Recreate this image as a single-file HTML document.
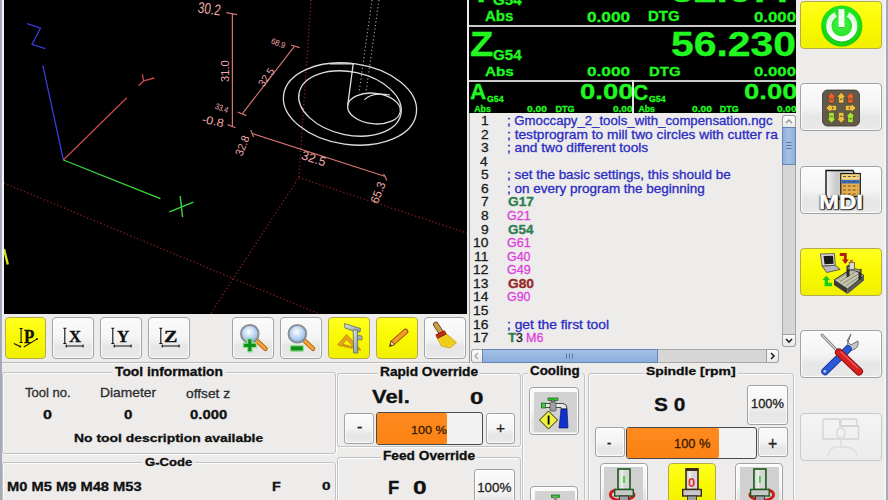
<!DOCTYPE html>
<html><head><meta charset="utf-8"><style>
*{box-sizing:border-box;margin:0;padding:0}
html,body{width:888px;height:500px;overflow:hidden}
body{position:relative;background:#edeceb;font-family:"Liberation Sans",sans-serif;color:#000}
.a{position:absolute}
.t{position:absolute;white-space:pre;line-height:1;-webkit-text-stroke-width:0.3px}
.btn{position:absolute;border:1px solid #a2a2a2;border-radius:4px;background:linear-gradient(#fbfbfb 0%,#f4f4f4 50%,#e6e6e6 72%,#e9e9e9 100%);box-shadow:inset 0 0 0 1px rgba(255,255,255,.8)}
.ybtn{position:absolute;border:1px solid #b4ab50;border-radius:4px;background:linear-gradient(#ffff20 0%,#f9f900 50%,#f0f000 100%)}
.dis{position:absolute;border:1px solid #cacaca;border-radius:4px;background:linear-gradient(#f4f4f4,#ececec)}
.frm{position:absolute;border:1px solid #c2c2c2;border-radius:3px;box-shadow:inset 1px 1px 0 #fbfbfb,1px 1px 0 #fbfbfb}
.tb{position:absolute;background:#edeceb}
svg{position:absolute;overflow:visible}
</style></head><body>
<div class="a" style="left:0;top:0;width:2px;height:500px;background:#a4aab8"></div>
<div class="a" style="left:2px;top:0;width:2px;height:315px;background:#f3f5f8"></div>
<div class="a" style="left:4px;top:0;width:463px;height:314px;background:#000;overflow:hidden"><svg width="463" height="314" viewBox="4 0 463 314" style="left:0;top:0"><path d="M4,183 L233.2,278.5 L322,315" fill="none" stroke="#902020" stroke-width="1.3" stroke-dasharray="1.2 2.4" opacity="1"/><path d="M311,0 L298.8,177.6 L233.2,278.5 L210,315" fill="none" stroke="#902020" stroke-width="1.3" stroke-dasharray="1.2 2.4" opacity="1"/><path d="M298.8,177.6 L467,233" fill="none" stroke="#902020" stroke-width="1.3" stroke-dasharray="1.2 2.4" opacity="1"/><path d="M63.4,160 L42.8,65.4" fill="none" stroke="#3a3ad8" stroke-width="1.3" opacity="1"/><path d="M27.2,23.6 L40.4,28.2 L32,44.4 L45.2,48.6" fill="none" stroke="#3a3ad8" stroke-width="1.3" opacity="1"/><path d="M63.4,160 L126.8,97.8" fill="none" stroke="#c84848" stroke-width="1.3" opacity="1"/><path d="M142.4,74.2 L143.6,81 L154.4,78" fill="none" stroke="#c84848" stroke-width="1.3" opacity="1"/><path d="M143.6,81 L138.6,85.8" fill="none" stroke="#c84848" stroke-width="1.3" opacity="1"/><path d="M63.4,160 L160.4,198.6" fill="none" stroke="#3cd83c" stroke-width="1.3" opacity="1"/><path d="M180.2,196.2 L182.6,217.2" fill="none" stroke="#3cd83c" stroke-width="1.4" opacity="1"/><path d="M169.4,211.8 L193.4,202.2" fill="none" stroke="#3cd83c" stroke-width="1.4" opacity="1"/><path d="M4,249 L7.8,264.5" fill="none" stroke="#d8e020" stroke-width="2.4" opacity="1"/><path d="M232.4,14 L232.4,126.2" fill="none" stroke="#d47474" stroke-width="1.2" opacity="1"/><path d="M226.4,12.6 L237,14.7" fill="none" stroke="#d47474" stroke-width="1.2" opacity="1"/><path d="M227.6,124.6 L235.6,127.8" fill="none" stroke="#d47474" stroke-width="1.2" opacity="1"/><path d="M242.4,113.6 L294.4,46.4" fill="none" stroke="#d47474" stroke-width="1.2" opacity="1"/><path d="M237.6,112 L246.4,115.6" fill="none" stroke="#d47474" stroke-width="1.2" opacity="1"/><path d="M291,45 L299.6,47.6" fill="none" stroke="#d47474" stroke-width="1.2" opacity="1"/><path d="M252.3,133.5 L384.7,176.3" fill="none" stroke="#d47474" stroke-width="1.2" opacity="1"/><path d="M250.7,130 L253.6,136.9" fill="none" stroke="#d47474" stroke-width="1.2" opacity="1"/><path d="M383.6,174 L387,180.4" fill="none" stroke="#d47474" stroke-width="1.2" opacity="1"/><ellipse cx="350" cy="104" rx="67" ry="40.5" transform="rotate(8 350 104)" fill="none" stroke="#dcdcdc" stroke-width="1.3"/><ellipse cx="350" cy="103.5" rx="52" ry="31.5" transform="rotate(12 350 103.5)" fill="none" stroke="#dcdcdc" stroke-width="1.3"/><ellipse cx="374" cy="108.5" rx="26.5" ry="15.3" transform="rotate(6 374 108.5)" fill="none" stroke="#dcdcdc" stroke-width="1.3"/><path d="M330,63.8 L353.2,63.8 L347.6,106.2" fill="none" stroke="#dcdcdc" stroke-width="1.3" opacity="1"/><path d="M364.4,99.8 Q372,92 390,95" fill="none" stroke="#dcdcdc" stroke-width="1.1"/><path d="M379,0 L366,92" fill="none" stroke="#90b0b0" stroke-width="1.1" stroke-dasharray="1.2 2.4" opacity="1"/><path d="M372,0 L359,93" fill="none" stroke="#90b0b0" stroke-width="1.1" stroke-dasharray="1.2 2.4" opacity="1"/></svg>
<div class="a" style="left:205.2px;top:8px;width:0;height:0;transform:rotate(8deg)"><div class="a" style="left:-11.0px;top:-5.5px"><span class="t" style="left:-0.47px;top:-1.82px;font-size:15.49px;font-weight:normal;color:#f0aaaa;font-family:'Liberation Sans';transform:scaleX(0.7634);transform-origin:0 0;-webkit-text-stroke-width:0">30.2</span></div></div>
<div class="a" style="left:221.2px;top:70.6px;width:0;height:0;transform:rotate(-90deg)"><div class="a" style="left:-10.5px;top:-3.75px"><span class="t" style="left:-0.45px;top:-1.08px;font-size:10.56px;font-weight:normal;color:#f0aaaa;font-family:'Liberation Sans';transform:scaleX(1.0631);transform-origin:0 0;-webkit-text-stroke-width:0">31.0</span></div></div>
<div class="a" style="left:218px;top:107.8px;width:0;height:0;transform:rotate(20deg)"><div class="a" style="left:-6.5px;top:-3.0px"><span class="t" style="left:-0.28px;top:-0.77px;font-size:8.45px;font-weight:normal;color:#f0aaaa;font-family:'Liberation Sans';transform:scaleX(0.8183);transform-origin:0 0;-webkit-text-stroke-width:0">33.4</span></div></div>
<div class="a" style="left:209.2px;top:121.4px;width:0;height:0;transform:rotate(12deg)"><div class="a" style="left:-10.5px;top:-4.0px"><span class="t" style="left:-0.51px;top:-1.19px;font-size:11.27px;font-weight:normal;color:#f0aaaa;font-family:'Liberation Sans';transform:scaleX(1.1364);transform-origin:0 0;-webkit-text-stroke-width:0">-0.8</span></div></div>
<div class="a" style="left:274px;top:42.5px;width:0;height:0;transform:rotate(22deg)"><div class="a" style="left:-7.0px;top:-3.0px"><span class="t" style="left:-0.38px;top:-0.77px;font-size:8.45px;font-weight:normal;color:#f0aaaa;font-family:'Liberation Sans';transform:scaleX(0.8955);transform-origin:0 0;-webkit-text-stroke-width:0">68.9</span></div></div>
<div class="a" style="left:262px;top:77px;width:0;height:0;transform:rotate(-55deg)"><div class="a" style="left:-9.5px;top:-3.75px"><span class="t" style="left:-0.41px;top:-1.08px;font-size:10.56px;font-weight:normal;color:#f0aaaa;font-family:'Liberation Sans';transform:scaleX(0.9670);transform-origin:0 0;-webkit-text-stroke-width:0">32.5</span></div></div>
<div class="a" style="left:237.7px;top:145.9px;width:0;height:0;transform:rotate(-68deg)"><div class="a" style="left:-10.0px;top:-4.0px"><span class="t" style="left:-0.43px;top:-1.19px;font-size:11.27px;font-weight:normal;color:#f0aaaa;font-family:'Liberation Sans';transform:scaleX(0.9543);transform-origin:0 0;-webkit-text-stroke-width:0">32.8</span></div></div>
<div class="a" style="left:310px;top:159.2px;width:0;height:0;transform:rotate(18deg)"><div class="a" style="left:-12.0px;top:-4.5px"><span class="t" style="left:-0.52px;top:-1.40px;font-size:12.68px;font-weight:normal;color:#f0aaaa;font-family:'Liberation Sans';transform:scaleX(1.0179);transform-origin:0 0;-webkit-text-stroke-width:0">32.5</span></div></div>
<div class="a" style="left:375px;top:193.2px;width:0;height:0;transform:rotate(-68deg)"><div class="a" style="left:-10.5px;top:-4.25px"><span class="t" style="left:-0.57px;top:-1.30px;font-size:11.97px;font-weight:normal;color:#f0aaaa;font-family:'Liberation Sans';transform:scaleX(0.9482);transform-origin:0 0;-webkit-text-stroke-width:0">65.3</span></div></div>
</div>
<div class="a" style="left:467px;top:0;width:2px;height:314px;background:#ececec"></div>
<div class="a" style="left:469px;top:0;width:327px;height:113px;background:#000;overflow:hidden">
<span class="t" style="left:1.13px;top:-27.47px;font-size:34.78px;font-weight:bold;color:#20f820;font-family:'Liberation Sans';transform:scaleX(0.9583);transform-origin:0 0;">Y</span>
<span class="t" style="left:23.99px;top:-6.55px;font-size:14.37px;font-weight:bold;color:#20f820;font-family:'Liberation Sans';transform:scaleX(1.0535);transform-origin:0 0;">G54</span>
<span class="t" style="left:201.57px;top:-26.63px;font-size:34.23px;font-weight:bold;color:#20f820;font-family:'Liberation Sans';transform:scaleX(1.1981);transform-origin:0 0;">52.677</span>
<span class="t" style="left:16.15px;top:10.45px;font-size:13.78px;font-weight:bold;color:#20f820;font-family:'Liberation Sans';transform:scaleX(1.0922);transform-origin:0 0;">Abs</span>
<span class="t" style="left:117.91px;top:10.17px;font-size:14.23px;font-weight:bold;color:#20f820;font-family:'Liberation Sans';transform:scaleX(1.2113);transform-origin:0 0;">0.000</span>
<span class="t" style="left:179.45px;top:10.41px;font-size:13.94px;font-weight:bold;color:#20f820;font-family:'Liberation Sans';transform:scaleX(1.0758);transform-origin:0 0;">DTG</span>
<span class="t" style="left:284.83px;top:10.17px;font-size:14.23px;font-weight:bold;color:#20f820;font-family:'Liberation Sans';transform:scaleX(1.1823);transform-origin:0 0;">0.000</span>
<span class="t" style="left:0.65px;top:27.18px;font-size:34.49px;font-weight:bold;color:#20f820;font-family:'Liberation Sans';transform:scaleX(1.1070);transform-origin:0 0;">Z</span>
<span class="t" style="left:24.19px;top:47.95px;font-size:14.37px;font-weight:bold;color:#20f820;font-family:'Liberation Sans';transform:scaleX(1.0535);transform-origin:0 0;">G54</span>
<span class="t" style="left:201.57px;top:27.45px;font-size:34.37px;font-weight:bold;color:#20f820;font-family:'Liberation Sans';transform:scaleX(1.1892);transform-origin:0 0;">56.230</span>
<span class="t" style="left:15.94px;top:64.88px;font-size:13.51px;font-weight:bold;color:#20f820;font-family:'Liberation Sans';transform:scaleX(1.1303);transform-origin:0 0;">Abs</span>
<span class="t" style="left:117.91px;top:65.05px;font-size:13.66px;font-weight:bold;color:#20f820;font-family:'Liberation Sans';transform:scaleX(1.2613);transform-origin:0 0;">0.000</span>
<span class="t" style="left:179.55px;top:65.19px;font-size:13.38px;font-weight:bold;color:#20f820;font-family:'Liberation Sans';transform:scaleX(1.1173);transform-origin:0 0;">DTG</span>
<span class="t" style="left:284.93px;top:65.05px;font-size:13.66px;font-weight:bold;color:#20f820;font-family:'Liberation Sans';transform:scaleX(1.2280);transform-origin:0 0;">0.000</span>
<span class="t" style="left:1.03px;top:81.20px;font-size:22.50px;font-weight:bold;color:#20f820;font-family:'Liberation Sans';">A</span>
<span class="t" style="left:17.55px;top:95.43px;font-size:8.45px;font-weight:bold;color:#20f820;font-family:'Liberation Sans';transform:scaleX(1.0362);transform-origin:0 0;">G54</span>
<span class="t" style="left:110.70px;top:81.00px;font-size:21.97px;font-weight:bold;color:#20f820;font-family:'Liberation Sans';transform:scaleX(1.2504);transform-origin:0 0;">0.00</span>
<span class="t" style="left:5.24px;top:104.65px;font-size:8.78px;font-weight:bold;color:#20f820;font-family:'Liberation Sans';">Abs</span>
<span class="t" style="left:58.39px;top:104.55px;font-size:9.01px;font-weight:bold;color:#20f820;font-family:'Liberation Sans';transform:scaleX(1.1332);transform-origin:0 0;">0.00</span>
<span class="t" style="left:86.57px;top:104.55px;font-size:9.01px;font-weight:bold;color:#20f820;font-family:'Liberation Sans';">DTG</span>
<span class="t" style="left:143.80px;top:104.55px;font-size:9.01px;font-weight:bold;color:#20f820;font-family:'Liberation Sans';transform:scaleX(1.1153);transform-origin:0 0;">0.00</span>
<span class="t" style="left:164.46px;top:81.57px;font-size:21.55px;font-weight:bold;color:#20f820;font-family:'Liberation Sans';transform:scaleX(0.9781);transform-origin:0 0;">C</span>
<span class="t" style="left:180.25px;top:95.43px;font-size:8.45px;font-weight:bold;color:#20f820;font-family:'Liberation Sans';transform:scaleX(1.0362);transform-origin:0 0;">G54</span>
<span class="t" style="left:274.90px;top:81.00px;font-size:21.97px;font-weight:bold;color:#20f820;font-family:'Liberation Sans';transform:scaleX(1.2504);transform-origin:0 0;">0.00</span>
<span class="t" style="left:169.44px;top:104.65px;font-size:8.78px;font-weight:bold;color:#20f820;font-family:'Liberation Sans';">Abs</span>
<span class="t" style="left:222.59px;top:104.55px;font-size:9.01px;font-weight:bold;color:#20f820;font-family:'Liberation Sans';transform:scaleX(1.1332);transform-origin:0 0;">0.00</span>
<span class="t" style="left:250.77px;top:104.55px;font-size:9.01px;font-weight:bold;color:#20f820;font-family:'Liberation Sans';">DTG</span>
<span class="t" style="left:308.00px;top:104.55px;font-size:9.01px;font-weight:bold;color:#20f820;font-family:'Liberation Sans';transform:scaleX(1.1153);transform-origin:0 0;">0.00</span>
</div>
<div class="a" style="left:469px;top:25px;width:327px;height:2px;background:#c9c9c9"></div>
<div class="a" style="left:469px;top:80px;width:327px;height:2px;background:#c9c9c9"></div>
<div class="a" style="left:632px;top:80px;width:2px;height:33px;background:#e4e4e4"></div>
<div class="a" style="left:796px;top:0;width:4px;height:500px;background:#edeceb"></div>
<div class="a" style="left:469px;top:113px;width:327px;height:250px;background:#edeceb"></div>
<div class="a" style="left:469px;top:113px;width:1px;height:250px;background:#999"></div>
<div class="a" style="left:470px;top:113px;width:312px;height:236px;overflow:hidden">
<span class="t" style="left:10.77px;top:2.07px;font-size:12.20px;font-weight:normal;color:#1c1c1c;transform:scaleX(1.1300);transform-origin:0 0">1</span><span class="t" style="left:36.91px;top:2.07px;font-size:12.20px;font-weight:normal;color:#2c2cc4;transform:scaleX(1.0828);transform-origin:0 0">; Gmoccapy_2_tools_with_compensation.ngc</span><span class="t" style="left:10.77px;top:15.64px;font-size:12.20px;font-weight:normal;color:#1c1c1c;transform:scaleX(1.1300);transform-origin:0 0">2</span><span class="t" style="left:36.86px;top:15.64px;font-size:12.20px;font-weight:normal;color:#2c2cc4;transform:scaleX(1.1264);transform-origin:0 0">; testprogram to mill two circles with cutter ra</span><span class="t" style="left:10.77px;top:29.21px;font-size:12.20px;font-weight:normal;color:#1c1c1c;transform:scaleX(1.1300);transform-origin:0 0">3</span><span class="t" style="left:36.87px;top:29.21px;font-size:12.20px;font-weight:normal;color:#2c2cc4;transform:scaleX(1.1226);transform-origin:0 0">; and two different tools</span><span class="t" style="left:10.49px;top:42.78px;font-size:12.20px;font-weight:normal;color:#1c1c1c;transform:scaleX(1.1300);transform-origin:0 0">4</span><span class="t" style="left:10.77px;top:56.35px;font-size:12.20px;font-weight:normal;color:#1c1c1c;transform:scaleX(1.1300);transform-origin:0 0">5</span><span class="t" style="left:36.89px;top:56.35px;font-size:12.20px;font-weight:normal;color:#2c2cc4;transform:scaleX(1.1045);transform-origin:0 0">; set the basic settings, this should be</span><span class="t" style="left:10.77px;top:69.92px;font-size:12.20px;font-weight:normal;color:#1c1c1c;transform:scaleX(1.1300);transform-origin:0 0">6</span><span class="t" style="left:36.89px;top:69.92px;font-size:12.20px;font-weight:normal;color:#2c2cc4;transform:scaleX(1.1059);transform-origin:0 0">; on every program the beginning</span><span class="t" style="left:10.77px;top:83.49px;font-size:12.20px;font-weight:normal;color:#1c1c1c;transform:scaleX(1.1300);transform-origin:0 0">7</span><span class="t" style="left:37.55px;top:83.49px;font-size:12.20px;font-weight:bold;color:#2e7d52;transform:scaleX(1.1276);transform-origin:0 0">G17</span><span class="t" style="left:10.77px;top:97.06px;font-size:12.20px;font-weight:normal;color:#1c1c1c;transform:scaleX(1.1300);transform-origin:0 0">8</span><span class="t" style="left:37.47px;top:97.06px;font-size:12.20px;font-weight:normal;color:#dd3fdd;transform:scaleX(1.0257);transform-origin:0 0">G21</span><span class="t" style="left:10.77px;top:110.63px;font-size:12.20px;font-weight:normal;color:#1c1c1c;transform:scaleX(1.1300);transform-origin:0 0">9</span><span class="t" style="left:37.56px;top:110.63px;font-size:12.20px;font-weight:bold;color:#2e7d52;transform:scaleX(1.1032);transform-origin:0 0">G54</span><span class="t" style="left:3.05px;top:124.20px;font-size:12.20px;font-weight:normal;color:#1c1c1c;transform:scaleX(1.1300);transform-origin:0 0">10</span><span class="t" style="left:37.47px;top:124.20px;font-size:12.20px;font-weight:normal;color:#dd3fdd;transform:scaleX(1.0257);transform-origin:0 0">G61</span><span class="t" style="left:4.15px;top:137.77px;font-size:12.20px;font-weight:normal;color:#1c1c1c;transform:scaleX(1.1300);transform-origin:0 0">11</span><span class="t" style="left:37.48px;top:137.77px;font-size:12.20px;font-weight:normal;color:#dd3fdd;transform:scaleX(1.0200);transform-origin:0 0">G40</span><span class="t" style="left:3.19px;top:151.34px;font-size:12.20px;font-weight:normal;color:#1c1c1c;transform:scaleX(1.1300);transform-origin:0 0">12</span><span class="t" style="left:37.47px;top:151.34px;font-size:12.20px;font-weight:normal;color:#dd3fdd;transform:scaleX(1.0257);transform-origin:0 0">G49</span><span class="t" style="left:3.05px;top:164.91px;font-size:12.20px;font-weight:normal;color:#1c1c1c;transform:scaleX(1.1300);transform-origin:0 0">13</span><span class="t" style="left:37.55px;top:164.91px;font-size:12.20px;font-weight:bold;color:#962828;transform:scaleX(1.1276);transform-origin:0 0">G80</span><span class="t" style="left:2.91px;top:178.48px;font-size:12.20px;font-weight:normal;color:#1c1c1c;transform:scaleX(1.1300);transform-origin:0 0">14</span><span class="t" style="left:37.48px;top:178.48px;font-size:12.20px;font-weight:normal;color:#dd3fdd;transform:scaleX(1.0200);transform-origin:0 0">G90</span><span class="t" style="left:3.05px;top:192.05px;font-size:12.20px;font-weight:normal;color:#1c1c1c;transform:scaleX(1.1300);transform-origin:0 0">15</span><span class="t" style="left:3.05px;top:205.62px;font-size:12.20px;font-weight:normal;color:#1c1c1c;transform:scaleX(1.1300);transform-origin:0 0">16</span><span class="t" style="left:36.86px;top:205.62px;font-size:12.20px;font-weight:normal;color:#2c2cc4;transform:scaleX(1.1321);transform-origin:0 0">; get the first tool</span><span class="t" style="left:3.19px;top:219.19px;font-size:12.20px;font-weight:normal;color:#1c1c1c;transform:scaleX(1.1300);transform-origin:0 0">17</span><span class="t" style="left:37.87px;top:219.19px;font-size:12.20px;font-weight:bold;color:#2e7d52;transform:scaleX(1.0975);transform-origin:0 0">T</span><span class="t" style="left:46.31px;top:219.19px;font-size:12.20px;font-weight:normal;color:#1c1c1c;transform:scaleX(1.0115);transform-origin:0 0">3</span><span class="t" style="left:56.40px;top:219.19px;font-size:12.20px;font-weight:normal;color:#dd3fdd;transform:scaleX(1.0278);transform-origin:0 0">M6</span>
</div>
<div class="a" style="left:782px;top:115px;width:14px;height:232px;background:#d6d6d6;border:1px solid #a8a8a8;border-radius:3px"></div>
<div class="a" style="left:782px;top:115px;width:14px;height:13px;background:linear-gradient(#fbfbfb,#e9e9e9);border:1px solid #a0a0a0;border-radius:3px 3px 0 0"></div>
<svg style="left:782px;top:115px" width="14" height="13"><path d="M4,8 L7,5 L10,8" fill="none" stroke="#909090" stroke-width="1.3"/></svg>
<div class="a" style="left:782px;top:127px;width:14px;height:38px;background:linear-gradient(90deg,#8fb0dc,#a6c2e6 50%,#8eaed9);border:1px solid #6486b4"></div>
<svg style="left:782px;top:127px" width="14" height="38"><path d="M4.5,15.5 H9.5 M4.5,18.5 H9.5 M4.5,21.5 H9.5" stroke="#56749e" stroke-width="1"/></svg>
<div class="a" style="left:782px;top:334px;width:14px;height:13px;background:linear-gradient(#fbfbfb,#e9e9e9);border:1px solid #a0a0a0;border-radius:0 0 3px 3px"></div>
<svg style="left:782px;top:334px" width="14" height="13"><path d="M4,5 L7,8 L10,5" fill="none" stroke="#222" stroke-width="1.6"/></svg>
<div class="a" style="left:471px;top:349px;width:308px;height:14px;background:#d6d6d6;border:1px solid #a8a8a8;border-radius:3px"></div>
<div class="a" style="left:471px;top:349px;width:12px;height:14px;background:linear-gradient(#fbfbfb,#e9e9e9);border:1px solid #a0a0a0;border-radius:3px 0 0 3px"></div>
<svg style="left:471px;top:349px" width="12" height="14"><path d="M7,4 L4,7 L7,10" fill="none" stroke="#a0a0a0" stroke-width="1.2"/></svg>
<div class="a" style="left:482px;top:349px;width:176px;height:14px;background:linear-gradient(#a4c0e4,#8caddb);border:1px solid #6486b4"></div>
<svg style="left:482px;top:349px" width="176" height="14"><path d="M84.5,4.5 V9.5 M87.5,4.5 V9.5 M90.5,4.5 V9.5" stroke="#56749e" stroke-width="1"/></svg>
<div class="a" style="left:766px;top:349px;width:13px;height:14px;background:linear-gradient(#fbfbfb,#e9e9e9);border:1px solid #a0a0a0;border-radius:0 3px 3px 0"></div>
<svg style="left:766px;top:349px" width="13" height="14"><path d="M5,4 L8,7 L5,10" fill="none" stroke="#222" stroke-width="1.6"/></svg>
<div class="ybtn" style="left:800px;top:1px;width:82px;height:48px"></div>
<div class="btn" style="left:800px;top:83px;width:82px;height:48px"></div>
<div class="btn" style="left:800px;top:166px;width:82px;height:48px"></div>
<div class="ybtn" style="left:800px;top:248px;width:82px;height:48px"></div>
<div class="btn" style="left:800px;top:330px;width:82px;height:48px"></div>
<div class="dis" style="left:800px;top:413px;width:82px;height:48px"></div>
<div class="a" style="left:884px;top:0;width:2px;height:500px;background:#f3f4f7"></div>
<div class="a" style="left:886px;top:0;width:2px;height:500px;background:#a4aab8"></div>
<svg style="left:0;top:0" width="888" height="500">
<defs>
<radialGradient id="pg" cx="0.5" cy="0.45" r="0.55"><stop offset="0" stop-color="#48f048"/><stop offset="0.8" stop-color="#18e018"/><stop offset="1" stop-color="#10c810"/></radialGradient>
<linearGradient id="ring" x1="0" y1="0" x2="0" y2="1"><stop offset="0" stop-color="#d8f8d8"/><stop offset="1" stop-color="#ffffff"/></linearGradient>
</defs>
<circle cx="841.8" cy="26" r="20.6" fill="url(#pg)"/>
<path d="M835.7,14.6 A12.9,12.9 0 1 0 847.9,14.6" fill="none" stroke="#0a9a0a" stroke-width="6" opacity="0.35" transform="translate(0,1)"/>
<path d="M835.7,14.6 A12.9,12.9 0 1 0 847.9,14.6" fill="none" stroke="url(#ring)" stroke-width="5.4"/>
<rect x="838.6" y="9" width="5.8" height="18.5" fill="#f4fff4"/>
<rect x="838.6" y="27" width="5.8" height="1" fill="#0a6a0a" opacity="0.5"/>
</svg>
<svg style="left:0;top:0" width="888" height="500"><rect x="822.5" y="90" width="37" height="36" rx="5" fill="#625a4a" stroke="#3c3428" stroke-width="0.8"/><path transform="translate(831.5,98) rotate(0) scale(1.0)" d="M0,-5.5 L4.3,-1 L2.6,-1 L2.6,5 L-2.6,5 L-2.6,-1 L-4.3,-1 Z" fill="#e8602a" stroke="#3a3020" stroke-width="0.4"/><rect transform="translate(831.5,98) rotate(0)" x="-1.2" y="0.5" width="2.4" height="1.3" fill="#3a2a10" opacity="0.6"/><path transform="translate(841.2,98) rotate(0) scale(1.0)" d="M0,-5.5 L4.3,-1 L2.6,-1 L2.6,5 L-2.6,5 L-2.6,-1 L-4.3,-1 Z" fill="#f0c040" stroke="#3a3020" stroke-width="0.4"/><rect transform="translate(841.2,98) rotate(0)" x="-1.2" y="0.5" width="2.4" height="1.3" fill="#3a2a10" opacity="0.6"/><path transform="translate(850.5,98) rotate(0) scale(1.0)" d="M0,-5.5 L4.3,-1 L2.6,-1 L2.6,5 L-2.6,5 L-2.6,-1 L-4.3,-1 Z" fill="#e8602a" stroke="#3a3020" stroke-width="0.4"/><rect transform="translate(850.5,98) rotate(0)" x="-1.2" y="0.5" width="2.4" height="1.3" fill="#3a2a10" opacity="0.6"/><path transform="translate(831.5,108) rotate(-90) scale(1.0)" d="M0,-5.5 L4.3,-1 L2.6,-1 L2.6,5 L-2.6,5 L-2.6,-1 L-4.3,-1 Z" fill="#f0c040" stroke="#3a3020" stroke-width="0.4"/><rect transform="translate(831.5,108) rotate(-90)" x="-1.2" y="0.5" width="2.4" height="1.3" fill="#3a2a10" opacity="0.6"/><path transform="translate(850.5,108) rotate(90) scale(1.0)" d="M0,-5.5 L4.3,-1 L2.6,-1 L2.6,5 L-2.6,5 L-2.6,-1 L-4.3,-1 Z" fill="#f0c040" stroke="#3a3020" stroke-width="0.4"/><rect transform="translate(850.5,108) rotate(90)" x="-1.2" y="0.5" width="2.4" height="1.3" fill="#3a2a10" opacity="0.6"/><path transform="translate(831.5,117.5) rotate(180) scale(1.0)" d="M0,-5.5 L4.3,-1 L2.6,-1 L2.6,5 L-2.6,5 L-2.6,-1 L-4.3,-1 Z" fill="#a8e830" stroke="#3a3020" stroke-width="0.4"/><rect transform="translate(831.5,117.5) rotate(180)" x="-1.2" y="0.5" width="2.4" height="1.3" fill="#3a2a10" opacity="0.6"/><path transform="translate(841.2,117.5) rotate(180) scale(1.0)" d="M0,-5.5 L4.3,-1 L2.6,-1 L2.6,5 L-2.6,5 L-2.6,-1 L-4.3,-1 Z" fill="#f0c040" stroke="#3a3020" stroke-width="0.4"/><rect transform="translate(841.2,117.5) rotate(180)" x="-1.2" y="0.5" width="2.4" height="1.3" fill="#3a2a10" opacity="0.6"/><path transform="translate(850.5,117.5) rotate(0) scale(1.0)" d="M0,-5.5 L4.3,-1 L2.6,-1 L2.6,5 L-2.6,5 L-2.6,-1 L-4.3,-1 Z" fill="#a8e830" stroke="#3a3020" stroke-width="0.4"/><rect transform="translate(850.5,117.5) rotate(0)" x="-1.2" y="0.5" width="2.4" height="1.3" fill="#3a2a10" opacity="0.6"/></svg>
<svg style="left:0;top:0" width="888" height="500">
<defs><linearGradient id="pgm" x1="0" x2="1"><stop offset="0" stop-color="#f2f2f2"/><stop offset="0.4" stop-color="#c8c8c8"/><stop offset="1" stop-color="#e8e8e8"/></linearGradient></defs>
<path d="M826,170.5 L853,170.5 L854,173 L854,199 L826,199 Z" fill="url(#pgm)" stroke="#111" stroke-width="1.4"/>
<rect x="840.8" y="173.5" width="19.5" height="23" fill="#e4b050" stroke="#1a1a1a" stroke-width="1.2"/>
<rect x="841.5" y="174.5" width="18" height="5" fill="#f0d48a"/><rect x="841.5" y="180" width="18" height="3.5" fill="#3070d0"/>
<path d="M843,176.5 H858 M843,181.8 H858 M843,186 H858 M843,190 H858 M843,194 H858" stroke="#6a4010" stroke-width="0.9" stroke-dasharray="3 1.8"/>
</svg>
<span class="t" style="left:819.12px;top:191.96px;font-size:20.87px;font-weight:bold;color:#ffffff;font-family:'Liberation Sans';transform:scaleX(1.1500);transform-origin:0 0;-webkit-text-stroke:0.5px #fff;text-shadow:1px 1px 1px #000,-0.5px -0.5px 1px #222,1px -0.5px 1px #222,-0.5px 1px 1px #222">MDI</span>
<svg style="left:0;top:0" width="888" height="500">
<path d="M820.4,254 L834.4,253.6 L835.3,265.3 L822.2,266.2 Z" fill="#d8d8d8" stroke="#505050" stroke-width="0.9"/>
<path d="M823.5,256 L833,255.8 L833.6,263.8 L824.5,264.3 Z" fill="#181818"/>
<path d="M822.2,266.2 L835.3,265.3 L840.2,269.4 L826.7,272.5 Z" fill="#b8b8b8" stroke="#505050" stroke-width="0.9"/>
<path d="M839.8,254.5 H845.3 V260.5" fill="none" stroke="#b02010" stroke-width="2.8"/>
<path d="M841.8,259.5 L848.8,259.5 L845.3,264 Z" fill="#b02010"/>
<path d="M826.3,279 V284.5 H832" fill="none" stroke="#18d018" stroke-width="3.4"/>
<path d="M822.5,280 L830,280 L826.3,275.5 Z" fill="#18d018"/>
<path d="M834,280 L852,268.5 L864,275.5 L847.5,289 Z" fill="#c4c4ac" stroke="#303030" stroke-width="1"/>
<path d="M837,279.5 L852,270 M840,281.5 L855,272 M843,283.5 L858,274 M846,285.5 L861,276" stroke="#707060" stroke-width="0.7"/>
<path d="M834,280 L847.5,289 L847.5,294 L834,285 Z" fill="#3a3a3a"/>
<path d="M847.5,289 L864,275.5 L864,280.5 L847.5,294 Z" fill="#585858"/>
<path d="M846.5,266 L849.5,264.5 L849.5,276 L846.5,277.5 Z" fill="#2a2a2a"/>
<path d="M858.5,270 L861.5,268.5 L861.5,279 L858.5,280.5 Z" fill="#2a2a2a"/>
<path d="M847.5,266.5 L860.5,270 L860.5,272.5 L847.5,269 Z" fill="#9a9a90" stroke="#303030" stroke-width="0.6"/>
<rect x="849.2" y="262.6" width="5.4" height="7" fill="#d8d8d0" stroke="#404040" stroke-width="0.7"/>
<rect x="850" y="259.9" width="2.8" height="3.2" fill="#c07030"/>
</svg>
<svg style="left:0;top:0" width="888" height="500">
<path d="M822,335 L839,352.5" stroke="#606060" stroke-width="2.6" stroke-linecap="round"/>
<path d="M822,335 L839,352.5" stroke="#d8d8d8" stroke-width="1.3" stroke-linecap="round"/>
<path d="M851,334 L847,341 L851,345 L858,341 C859,347 855,351 849,350 L846,348 Z" fill="#c8c8c8" stroke="#707070" stroke-width="1"/>
<path d="M848,349 L825,371.5" stroke="#1a3aa0" stroke-width="7.5" stroke-linecap="round"/>
<path d="M848,349 L825,371.5" stroke="#2a5ad8" stroke-width="5.5" stroke-linecap="round"/>
<circle cx="824.8" cy="371.2" r="1.3" fill="#c8d8ff"/>
<path d="M839,352.5 L859,371.5" stroke="#901010" stroke-width="8" stroke-linecap="round"/>
<path d="M839,352.5 L859,371.5" stroke="#d82020" stroke-width="6" stroke-linecap="round"/>
<path d="M841,352 L858,368" stroke="#f06060" stroke-width="1.2" stroke-linecap="round"/>
</svg>
<svg style="left:0;top:0;opacity:0.8" width="888" height="500">
<path d="M823,439 V420.5 Q823,419 824.5,419 H838.5 Q839.8,419 839.8,420.5 V426 H858.5 V439 Z" fill="none" stroke="#cdcdcd" stroke-width="1.4"/>
<rect x="840.8" y="419" width="16" height="7" rx="1.2" fill="none" stroke="#cdcdcd" stroke-width="1.3"/>
<path d="M840.8,428 C835,428 835.5,437 840.8,438.5 C846,437 846.5,428 840.8,428 Z" fill="none" stroke="#d2d2d2" stroke-width="1.3"/>
<path d="M840.8,438.5 V446" stroke="#d8d8d8" stroke-width="1.3"/>
<path d="M828,456 Q829,448 836,447 H846 Q856,448 857,456" fill="none" stroke="#dadada" stroke-width="1.4"/>
</svg>
<div class="ybtn" style="left:5px;top:317px;width:41px;height:41.5px"></div>
<div class="btn" style="left:52px;top:317px;width:42px;height:41.5px"></div>
<div class="btn" style="left:100px;top:317px;width:42px;height:41.5px"></div>
<div class="btn" style="left:148px;top:317px;width:42px;height:41.5px"></div>
<div class="btn" style="left:232px;top:317px;width:42px;height:41.5px"></div>
<div class="btn" style="left:280px;top:317px;width:42px;height:41.5px"></div>
<div class="ybtn" style="left:328px;top:317px;width:42px;height:41.5px"></div>
<div class="ybtn" style="left:376px;top:317px;width:42px;height:41.5px"></div>
<div class="btn" style="left:424px;top:317px;width:42px;height:41.5px"></div>
<svg style="left:0;top:0" width="888" height="500">
<path d="M21.1,328.5 V342.5 M19.6,328.5 H22.6 M19.6,342.5 H22.6" stroke="#111" stroke-width="1.1"/>
<path d="M13.9,343.4 L20.7,346.8 M23.8,347 L37.3,338.9" stroke="#111" stroke-width="1.1"/>
<circle cx="20.3" cy="346.5" r="0.9" fill="#111"/><circle cx="37" cy="339" r="0.9" fill="#111"/>
</svg>
<span class="t" style="left:23.96px;top:328.06px;font-size:18.00px;font-weight:bold;color:#111;font-family:'Liberation Serif';transform:scaleX(0.9325);transform-origin:0 0;">P</span>
<svg style="left:0;top:0" width="888" height="500">
<path d="M64.8,328.2 V343.5 M63.3,328.2 H66.3 M63.3,343.5 H66.3" stroke="#111" stroke-width="1.1"/>
<path d="M66.2,346 H83.1 M66.2,344.5 V347.5 M83.1,344.5 V347.5" stroke="#111" stroke-width="1.1"/>
</svg>
<span class="t" style="left:68.87px;top:327.72px;font-size:17.69px;font-weight:bold;color:#111;font-family:'Liberation Serif';transform:scaleX(0.9420);transform-origin:0 0;">X</span>
<svg style="left:0;top:0" width="888" height="500">
<path d="M112.8,328.2 V343.5 M111.3,328.2 H114.3 M111.3,343.5 H114.3" stroke="#111" stroke-width="1.1"/>
<path d="M114.2,346 H131.1 M114.2,344.5 V347.5 M131.1,344.5 V347.5" stroke="#111" stroke-width="1.1"/>
</svg>
<span class="t" style="left:116.86px;top:327.72px;font-size:17.69px;font-weight:bold;color:#111;font-family:'Liberation Serif';transform:scaleX(0.9559);transform-origin:0 0;">Y</span>
<svg style="left:0;top:0" width="888" height="500">
<path d="M160.8,328.2 V343.5 M159.3,328.2 H162.3 M159.3,343.5 H162.3" stroke="#111" stroke-width="1.1"/>
<path d="M162.2,346 H179.1 M162.2,344.5 V347.5 M179.1,344.5 V347.5" stroke="#111" stroke-width="1.1"/>
</svg>
<span class="t" style="left:164.19px;top:327.72px;font-size:17.69px;font-weight:bold;color:#111;font-family:'Liberation Serif';transform:scaleX(1.1404);transform-origin:0 0;">Z</span>
<svg style="left:0;top:0" width="888" height="500"><defs><radialGradient id="mg249" cx="0.45" cy="0.4" r="0.6"><stop offset="0" stop-color="#ffffff"/><stop offset="0.5" stop-color="#c4dcf4"/><stop offset="1" stop-color="#8cb4e4"/></radialGradient></defs><line x1="256.8" y1="340.7" x2="265.3" y2="348.7" stroke="#a05800" stroke-width="4.6" stroke-linecap="round"/><line x1="256.8" y1="340.7" x2="265.3" y2="348.7" stroke="#f8a030" stroke-width="3" stroke-linecap="round"/><circle cx="249.8" cy="333.7" r="8.8" fill="url(#mg249)" stroke="#8a8f96" stroke-width="2"/><path d="M247.60000000000002,338.7 h4.4 v4.4 h4.4 v4.4 h-4.4 v4.4 h-4.4 v-4.4 h-4.4 v-4.4 h4.4 z" fill="#10901a" stroke="#90e090" stroke-width="1.2" transform="translate(0,0)"/></svg>
<svg style="left:0;top:0" width="888" height="500"><defs><radialGradient id="mg297" cx="0.45" cy="0.4" r="0.6"><stop offset="0" stop-color="#ffffff"/><stop offset="0.5" stop-color="#c4dcf4"/><stop offset="1" stop-color="#8cb4e4"/></radialGradient></defs><line x1="304.4" y1="340.7" x2="312.9" y2="348.7" stroke="#a05800" stroke-width="4.6" stroke-linecap="round"/><line x1="304.4" y1="340.7" x2="312.9" y2="348.7" stroke="#f8a030" stroke-width="3" stroke-linecap="round"/><circle cx="297.4" cy="333.7" r="8.8" fill="url(#mg297)" stroke="#8a8f96" stroke-width="2"/><rect x="290.4" y="345.7" width="13" height="5.5" rx="1" fill="#10901a" stroke="#90e090" stroke-width="1.2"/></svg>
<svg style="left:0;top:0" width="888" height="500">
<defs><linearGradient id="calg" x1="0" y1="0" x2="1" y2="1"><stop offset="0" stop-color="#dfe6e6"/><stop offset="1" stop-color="#8a9898"/></linearGradient></defs>
<path d="M337.6,344.7 L346.6,334.4 L361,350 Z M342.5,344.2 L346.8,339.5 L353.5,347 Z" fill="#eaa21e" fill-rule="evenodd" stroke="#b87a10" stroke-width="0.7"/>
<path d="M339,346 L360,350.5" stroke="#d08a10" stroke-width="1" stroke-dasharray="1 1.5"/>
<path d="M344.4,323.5 L360.5,328.5 L360,332 L353.5,330.8 L353.5,331 L345,328 Z" fill="url(#calg)" stroke="#5a6868" stroke-width="0.8"/>
<path d="M353.2,330 L357.6,330 L357.8,353 L353.6,353 Z" fill="url(#calg)" stroke="#5a6868" stroke-width="0.8"/>
<path d="M357.6,335.3 L362,336 L362,340 L357.6,339.6 Z" fill="#a8b4b4" stroke="#5a6868" stroke-width="0.7"/>
</svg>
<svg style="left:0;top:0" width="888" height="500">
<line x1="393" y1="342.5" x2="405.5" y2="331.5" stroke="#8a4a00" stroke-width="5.6" stroke-linecap="round"/>
<line x1="393" y1="342.5" x2="405.5" y2="331.5" stroke="#f39a28" stroke-width="3.8" stroke-linecap="round"/>
<path d="M389.5,346.5 L391,341 L395,344.5 Z" fill="#f0d0a0" stroke="#5a3a10" stroke-width="0.8"/>
<path d="M389.5,346.5 L390.3,344 L392,345.5 Z" fill="#222"/>
</svg>
<svg style="left:0;top:0" width="888" height="500">
<path d="M437,337.5 L445.5,333 L456.5,342.5 L450,348 L441.5,346 Z" fill="#f2d21e" stroke="#c8a010" stroke-width="0.8"/>
<path d="M441,338 L447,346 M444,336.5 L451,345 M447,335.5 L454,343" stroke="#d8b010" stroke-width="0.7"/>
<path d="M435.8,324.5 L440.7,332" stroke="#6a4a20" stroke-width="5.6" stroke-linecap="round"/>
<path d="M435.8,324.5 L440.7,332" stroke="#cf9a48" stroke-width="4" stroke-linecap="round"/>
<path d="M436.5,336.8 L445.5,332.2" stroke="#5a1a10" stroke-width="4.6"/>
<path d="M436.5,336.8 L445.5,332.2" stroke="#c82818" stroke-width="3"/>
</svg>
<div class="a" style="left:2px;top:362px;width:467px;height:1px;background:#b9b9b9"></div>
<div class="a" style="left:2px;top:363px;width:467px;height:1px;background:#fafafa"></div>
<div class="frm" style="left:2px;top:372px;width:334px;height:82px"></div>
<div class="tb" style="left:112.2px;top:366.6px;width:112.89999999999999px;height:9.199999999999989px"></div>
<span class="t" style="left:115.06px;top:365.61px;font-size:12.43px;font-weight:bold;color:#0e0e0e;font-family:'Liberation Sans';transform:scaleX(1.1109);transform-origin:0 0;">Tool information</span>
<div class="frm" style="left:2px;top:462px;width:334px;height:58px"></div>
<div class="tb" style="left:142.4px;top:457.1px;width:52.400000000000006px;height:8.599999999999966px"></div>
<span class="t" style="left:144.88px;top:456.21px;font-size:11.62px;font-weight:bold;color:#0e0e0e;font-family:'Liberation Sans';transform:scaleX(1.1278);transform-origin:0 0;">G-Code</span>
<div class="frm" style="left:337px;top:373px;width:184px;height:74px"></div>
<div class="tb" style="left:377.8px;top:366.8px;width:102.59999999999997px;height:11.399999999999977px"></div>
<span class="t" style="left:379.84px;top:365.84px;font-size:12.13px;font-weight:bold;color:#0e0e0e;font-family:'Liberation Sans';transform:scaleX(1.1282);transform-origin:0 0;">Rapid Override</span>
<div class="frm" style="left:337px;top:457px;width:184px;height:63px"></div>
<div class="tb" style="left:380.7px;top:451.0px;width:96.69999999999999px;height:9.199999999999989px"></div>
<span class="t" style="left:382.74px;top:450.01px;font-size:12.43px;font-weight:bold;color:#0e0e0e;font-family:'Liberation Sans';transform:scaleX(1.1020);transform-origin:0 0;">Feed Override</span>
<div class="frm" style="left:522px;top:373px;width:63px;height:147px"></div>
<div class="tb" style="left:527.8px;top:366.8px;width:54.200000000000045px;height:11.199999999999989px"></div>
<span class="t" style="left:530.27px;top:365.87px;font-size:11.91px;font-weight:bold;color:#0e0e0e;font-family:'Liberation Sans';transform:scaleX(1.1206);transform-origin:0 0;">Cooling</span>
<div class="frm" style="left:588px;top:373px;width:206px;height:147px"></div>
<div class="tb" style="left:643.8px;top:366.8px;width:94.5px;height:10.5px"></div>
<span class="t" style="left:646.38px;top:365.96px;font-size:11.17px;font-weight:bold;color:#0e0e0e;font-family:'Liberation Sans';transform:scaleX(1.2457);transform-origin:0 0;">Spindle [rpm]</span>
<span class="t" style="left:24.84px;top:387.39px;font-size:12.57px;font-weight:normal;color:#2e2e2e;font-family:'Liberation Sans';transform:scaleX(1.0398);transform-origin:0 0;">Tool no.</span>
<span class="t" style="left:99.69px;top:387.39px;font-size:12.57px;font-weight:normal;color:#2e2e2e;font-family:'Liberation Sans';transform:scaleX(1.0991);transform-origin:0 0;">Diameter</span>
<span class="t" style="left:185.95px;top:387.71px;font-size:12.43px;font-weight:normal;color:#2e2e2e;font-family:'Liberation Sans';transform:scaleX(1.1086);transform-origin:0 0;">offset z</span>
<span class="t" style="left:43.05px;top:409.04px;font-size:12.39px;font-weight:bold;color:#111;font-family:'Liberation Sans';transform:scaleX(1.3046);transform-origin:0 0;">0</span>
<span class="t" style="left:123.90px;top:409.04px;font-size:12.39px;font-weight:bold;color:#111;font-family:'Liberation Sans';transform:scaleX(1.2188);transform-origin:0 0;">0</span>
<span class="t" style="left:190.10px;top:408.86px;font-size:12.25px;font-weight:bold;color:#111;font-family:'Liberation Sans';transform:scaleX(1.2140);transform-origin:0 0;">0.000</span>
<span class="t" style="left:73.73px;top:432.10px;font-size:11.70px;font-weight:bold;color:#111;font-family:'Liberation Sans';transform:scaleX(1.1892);transform-origin:0 0;">No tool description available</span>
<span class="t" style="left:6.67px;top:480.72px;font-size:12.54px;font-weight:bold;color:#111;font-family:'Liberation Sans';transform:scaleX(1.1720);transform-origin:0 0;">M0 M5 M9 M48 M53</span>
<span class="t" style="left:271.79px;top:480.55px;font-size:12.17px;font-weight:bold;color:#111;font-family:'Liberation Sans';transform:scaleX(1.1829);transform-origin:0 0;">F</span>
<span class="t" style="left:321.99px;top:480.73px;font-size:11.83px;font-weight:bold;color:#111;font-family:'Liberation Sans';transform:scaleX(1.2948);transform-origin:0 0;">0</span>
<span class="t" style="left:371.78px;top:388.56px;font-size:17.84px;font-weight:bold;color:#111;font-family:'Liberation Sans';transform:scaleX(1.2306);transform-origin:0 0;">Vel.</span>
<span class="t" style="left:470.43px;top:390.09px;font-size:16.06px;font-weight:bold;color:#111;font-family:'Liberation Sans';transform:scaleX(1.5106);transform-origin:0 0;">0</span>
<div class="btn" style="left:344px;top:413px;width:30px;height:30.5px;border-radius:3px"></div>
<span class="t" style="left:356.86px;top:418.85px;font-size:17.50px;font-weight:normal;color:#222;font-family:'Liberation Sans';transform:scaleX(0.9143);transform-origin:0 0;">-</span>
<div class="btn" style="left:485.5px;top:413px;width:29.0px;height:30.5px;border-radius:3px"></div>
<span class="t" style="left:495.72px;top:420.37px;font-size:15.31px;font-weight:normal;color:#222;font-family:'Liberation Sans';transform:scaleX(1.0208);transform-origin:0 0;">+</span>
<div class="a" style="left:376px;top:412px;width:107px;height:32.5px;background:#f2f2f2;border:1px solid #4a4a4a;border-radius:3px"></div>
<div class="a" style="left:377px;top:413px;width:70.30000000000001px;height:30.5px;background:linear-gradient(#ff8a1e,#fb8214);border-radius:2px"></div>
<span class="t" style="left:411.49px;top:423.55px;font-size:11.69px;font-weight:normal;color:#3a1c00;font-family:'Liberation Sans';transform:scaleX(1.0819);transform-origin:0 0;">100 %</span>
<span class="t" style="left:388.21px;top:478.90px;font-size:18.12px;font-weight:bold;color:#111;font-family:'Liberation Sans';transform:scaleX(1.0157);transform-origin:0 0;">F</span>
<span class="t" style="left:413.02px;top:479.86px;font-size:17.61px;font-weight:bold;color:#111;font-family:'Liberation Sans';transform:scaleX(1.3898);transform-origin:0 0;">0</span>
<div class="btn" style="left:474px;top:468.5px;width:41px;height:45px;border-radius:3px"></div>
<span class="t" style="left:477.13px;top:481.29px;font-size:13.38px;font-weight:normal;color:#222;font-family:'Liberation Sans';">100%</span>
<span class="t" style="left:653.77px;top:395.77px;font-size:18.17px;font-weight:bold;color:#111;font-family:'Liberation Sans';transform:scaleX(1.1508);transform-origin:0 0;">S 0</span>
<div class="btn" style="left:747.3px;top:384.5px;width:41px;height:40.5px;border-radius:3px"></div>
<span class="t" style="left:751.37px;top:398.90px;font-size:11.97px;font-weight:normal;color:#222;font-family:'Liberation Sans';transform:scaleX(1.0715);transform-origin:0 0;">100%</span>
<div class="btn" style="left:595px;top:427.4px;width:29.600000000000023px;height:30.100000000000023px;border-radius:3px"></div>
<span class="t" style="left:607.49px;top:435.35px;font-size:17.50px;font-weight:normal;color:#222;font-family:'Liberation Sans';transform:scaleX(0.7314);transform-origin:0 0;">-</span>
<div class="btn" style="left:758px;top:427.4px;width:30.200000000000045px;height:30.100000000000023px;border-radius:3px"></div>
<span class="t" style="left:768.21px;top:435.51px;font-size:17.76px;font-weight:normal;color:#222;font-family:'Liberation Sans';transform:scaleX(0.8918);transform-origin:0 0;">+</span>
<div class="a" style="left:626px;top:426.5px;width:130.5px;height:32.30000000000001px;background:#f2f2f2;border:1px solid #4a4a4a;border-radius:3px"></div>
<div class="a" style="left:627px;top:427.5px;width:92.29999999999995px;height:30.30000000000001px;background:linear-gradient(#ff8a1e,#fb8214);border-radius:2px"></div>
<span class="t" style="left:673.97px;top:437.54px;font-size:12.39px;font-weight:normal;color:#3a1c00;font-family:'Liberation Sans';transform:scaleX(1.0382);transform-origin:0 0;">100 %</span>
<div class="btn" style="left:529.4px;top:387.3px;width:49.2px;height:48px;border-radius:4px"></div>
<div class="a" style="left:534px;top:392px;width:42.6px;height:40px;background:#d2d2d2"></div>
<svg style="left:0;top:0" width="888" height="500">
<rect x="548" y="398" width="10" height="2.5" fill="#30d030" stroke="#104010" stroke-width="0.6"/>
<rect x="551.5" y="400" width="3" height="5" fill="#909090" stroke="#303030" stroke-width="0.5"/>
<path d="M542,403.5 L563,403.5 Q567,404 567,408 L567,409 L561,409 L561,407.5 L542,407.5 Z" fill="#e8e8e8" stroke="#103010" stroke-width="0.8"/>
<rect x="541.5" y="403" width="4" height="5" fill="#40d040" stroke="#104010" stroke-width="0.6"/>
<rect x="550" y="402" width="6" height="9" rx="1" fill="#a0a0a0" stroke="#303030" stroke-width="0.6"/>
<path d="M561,409 L567,409 L568,428 L559,428 Z" fill="#1030d0" stroke="#000a40" stroke-width="0.6"/>
<path d="M548.5,411 L557.5,420 L548.5,429 L539.5,420 Z" fill="#f0f040" stroke="#203000" stroke-width="1"/>
<rect x="547.7" y="415.5" width="1.8" height="9" fill="#000"/>
</svg>
<div class="btn" style="left:530px;top:486.2px;width:48px;height:30px;border-radius:4px"></div>
<div class="a" style="left:534.5px;top:491px;width:40px;height:12px;background:#d2d2d2"></div>
<svg style="left:0;top:0" width="888" height="500">
<rect x="551.5" y="495" width="8" height="2.5" fill="#30d030" stroke="#104010" stroke-width="0.6"/>
<rect x="554" y="497" width="3" height="4" fill="#909090"/>
</svg>
<div class="btn" style="left:599.5px;top:463.3px;width:48px;height:45px;border-radius:4px"></div>
<div class="a" style="left:604.2px;top:466.6px;width:39.2px;height:40px;background:#d0d0d0"></div>
<svg style="left:0;top:0" width="888" height="500"><path d="M633.0,493 C638.0,498 622.0,502 614.0,499 C608.0,496 610.0,491 616.0,490" fill="none" stroke="#d01818" stroke-width="2.8"/><rect x="618.0" y="469" width="12" height="20.5" fill="#d6d6d6" stroke="#1a5a1a" stroke-width="1.6"/><rect x="620.5" y="470" width="3" height="18.5" fill="#f2f2f2" opacity="0.7"/><rect x="623.1" y="476" width="1.8" height="7" fill="#40d040"/><rect x="614.7" y="489.5" width="18.6" height="6.5" fill="#c8c8c8" stroke="#1a5a1a" stroke-width="1.4"/><rect x="619.5" y="496" width="9" height="6" fill="#a0a0a0" stroke="#303030" stroke-width="0.9"/></svg>
<div class="ybtn" style="left:667.5px;top:463.3px;width:48px;height:45px;border-radius:4px"></div>
<svg style="left:0;top:0" width="888" height="500"><rect x="686.0" y="469" width="12" height="20.5" fill="#d6d6d6" stroke="#3a2a1a" stroke-width="1.6"/><rect x="688.5" y="470" width="3" height="18.5" fill="#f2f2f2" opacity="0.7"/><rect x="685.7" y="468" width="12.6" height="3" fill="#3a2a1a"/><rect x="682.7" y="489.5" width="18.6" height="6.5" fill="#c8c8c8" stroke="#3a2a1a" stroke-width="1.4"/><rect x="687.5" y="496" width="9" height="6" fill="#a0a0a0" stroke="#303030" stroke-width="0.9"/></svg>
<span class="t" style="left:688.47px;top:476.56px;font-size:12.96px;font-weight:bold;color:#e03030;font-family:'Liberation Sans';transform:scaleX(1.0180);transform-origin:0 0;-webkit-text-stroke-width:0">0</span>
<div class="btn" style="left:735.4px;top:463.3px;width:48px;height:45px;border-radius:4px"></div>
<div class="a" style="left:740.1px;top:466.6px;width:39.2px;height:40px;background:#d0d0d0"></div>
<svg style="left:0;top:0" width="888" height="500"><path d="M750.9,493 C745.9,498 761.9,502 769.9,499 C775.9,496 773.9,491 767.9,490" fill="none" stroke="#d01818" stroke-width="2.8"/><rect x="753.9" y="469" width="12" height="20.5" fill="#d6d6d6" stroke="#1a5a1a" stroke-width="1.6"/><rect x="756.4" y="470" width="3" height="18.5" fill="#f2f2f2" opacity="0.7"/><rect x="759.0" y="476" width="1.8" height="7" fill="#40d040"/><rect x="750.6" y="489.5" width="18.6" height="6.5" fill="#c8c8c8" stroke="#1a5a1a" stroke-width="1.4"/><rect x="755.4" y="496" width="9" height="6" fill="#a0a0a0" stroke="#303030" stroke-width="0.9"/></svg>
</body></html>
